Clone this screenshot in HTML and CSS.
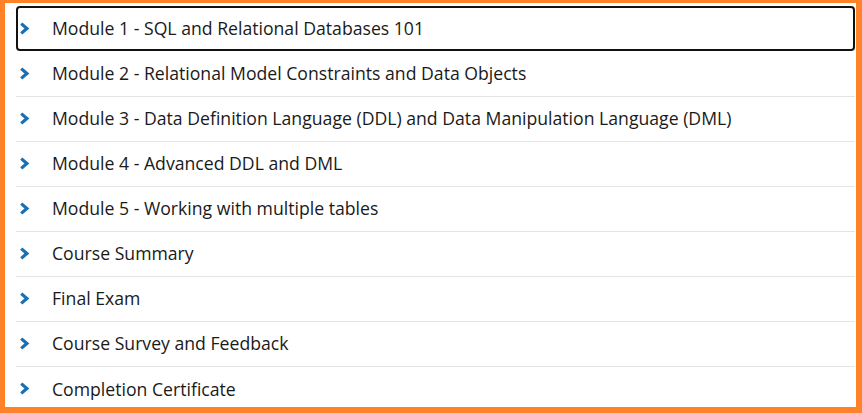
FILE: index.html
```html
<!DOCTYPE html>
<html>
<head>
<meta charset="utf-8">
<link rel="stylesheet" href="styles.css">
</head>
<body>
<div class="frame">
  <ul class="list">
    <li class="item active"><svg class="chev" viewBox="0 0 10 12"><path d="M2 1.5 L7.2 6 L2 10.5" /></svg><span>Module 1 - SQL and Relational Databases 101</span></li>
    <li class="item"><svg class="chev" viewBox="0 0 10 12"><path d="M2 1.5 L7.2 6 L2 10.5" /></svg><span>Module 2 - Relational Model Constraints and Data Objects</span></li>
    <li class="item"><svg class="chev" viewBox="0 0 10 12"><path d="M2 1.5 L7.2 6 L2 10.5" /></svg><span>Module 3 - Data Definition Language (DDL) and Data Manipulation Language (DML)</span></li>
    <li class="item"><svg class="chev" viewBox="0 0 10 12"><path d="M2 1.5 L7.2 6 L2 10.5" /></svg><span>Module 4 - Advanced DDL and DML</span></li>
    <li class="item"><svg class="chev" viewBox="0 0 10 12"><path d="M2 1.5 L7.2 6 L2 10.5" /></svg><span>Module 5 - Working with multiple tables</span></li>
    <li class="item"><svg class="chev" viewBox="0 0 10 12"><path d="M2 1.5 L7.2 6 L2 10.5" /></svg><span>Course Summary</span></li>
    <li class="item"><svg class="chev" viewBox="0 0 10 12"><path d="M2 1.5 L7.2 6 L2 10.5" /></svg><span>Final Exam</span></li>
    <li class="item"><svg class="chev" viewBox="0 0 10 12"><path d="M2 1.5 L7.2 6 L2 10.5" /></svg><span>Course Survey and Feedback</span></li>
    <li class="item last"><svg class="chev" viewBox="0 0 10 12"><path d="M2 1.5 L7.2 6 L2 10.5" /></svg><span>Completion Certificate</span></li>
  </ul>
</div>
</body>
</html>
```
FILE: styles.css
```css
html, body {
  margin: 0;
  padding: 0;
  background: #ff8228;
}
.frame {
  box-sizing: border-box;
  width: 862px;
  height: 413px;
  border-style: solid;
  border-color: #ff8228;
  border-width: 3px 6px 6px 5px;
  background: #ffffff;
  padding: 3px 0 0 11px;
  overflow: hidden;
}
.list {
  list-style: none;
  margin: 0;
  padding: 0;
  width: 839px;
}
.item {
  box-sizing: border-box;
  height: 45px;
  display: flex;
  align-items: center;
  border-bottom: 1px solid #e4e4e4;
  font-family: "Open Sans", sans-serif;
  font-size: 17.65px;
  color: #1a1a1a;
  padding-left: 2px;
  padding-bottom: 2px;
}
.item.active {
  margin-bottom: 1px;
  border: 2px solid #111111;
  border-radius: 4px;
  padding-left: 0;
  padding-bottom: 1px;
}
.item.last {
  border-bottom: none;
}
.chev {
  width: 11px;
  height: 13px;
  margin-left: 1px;
  margin-right: 22px;
  fill: none;
  stroke: #1b70b4;
  stroke-width: 3;
  stroke-linecap: butt;
  stroke-linejoin: miter;
}
```
